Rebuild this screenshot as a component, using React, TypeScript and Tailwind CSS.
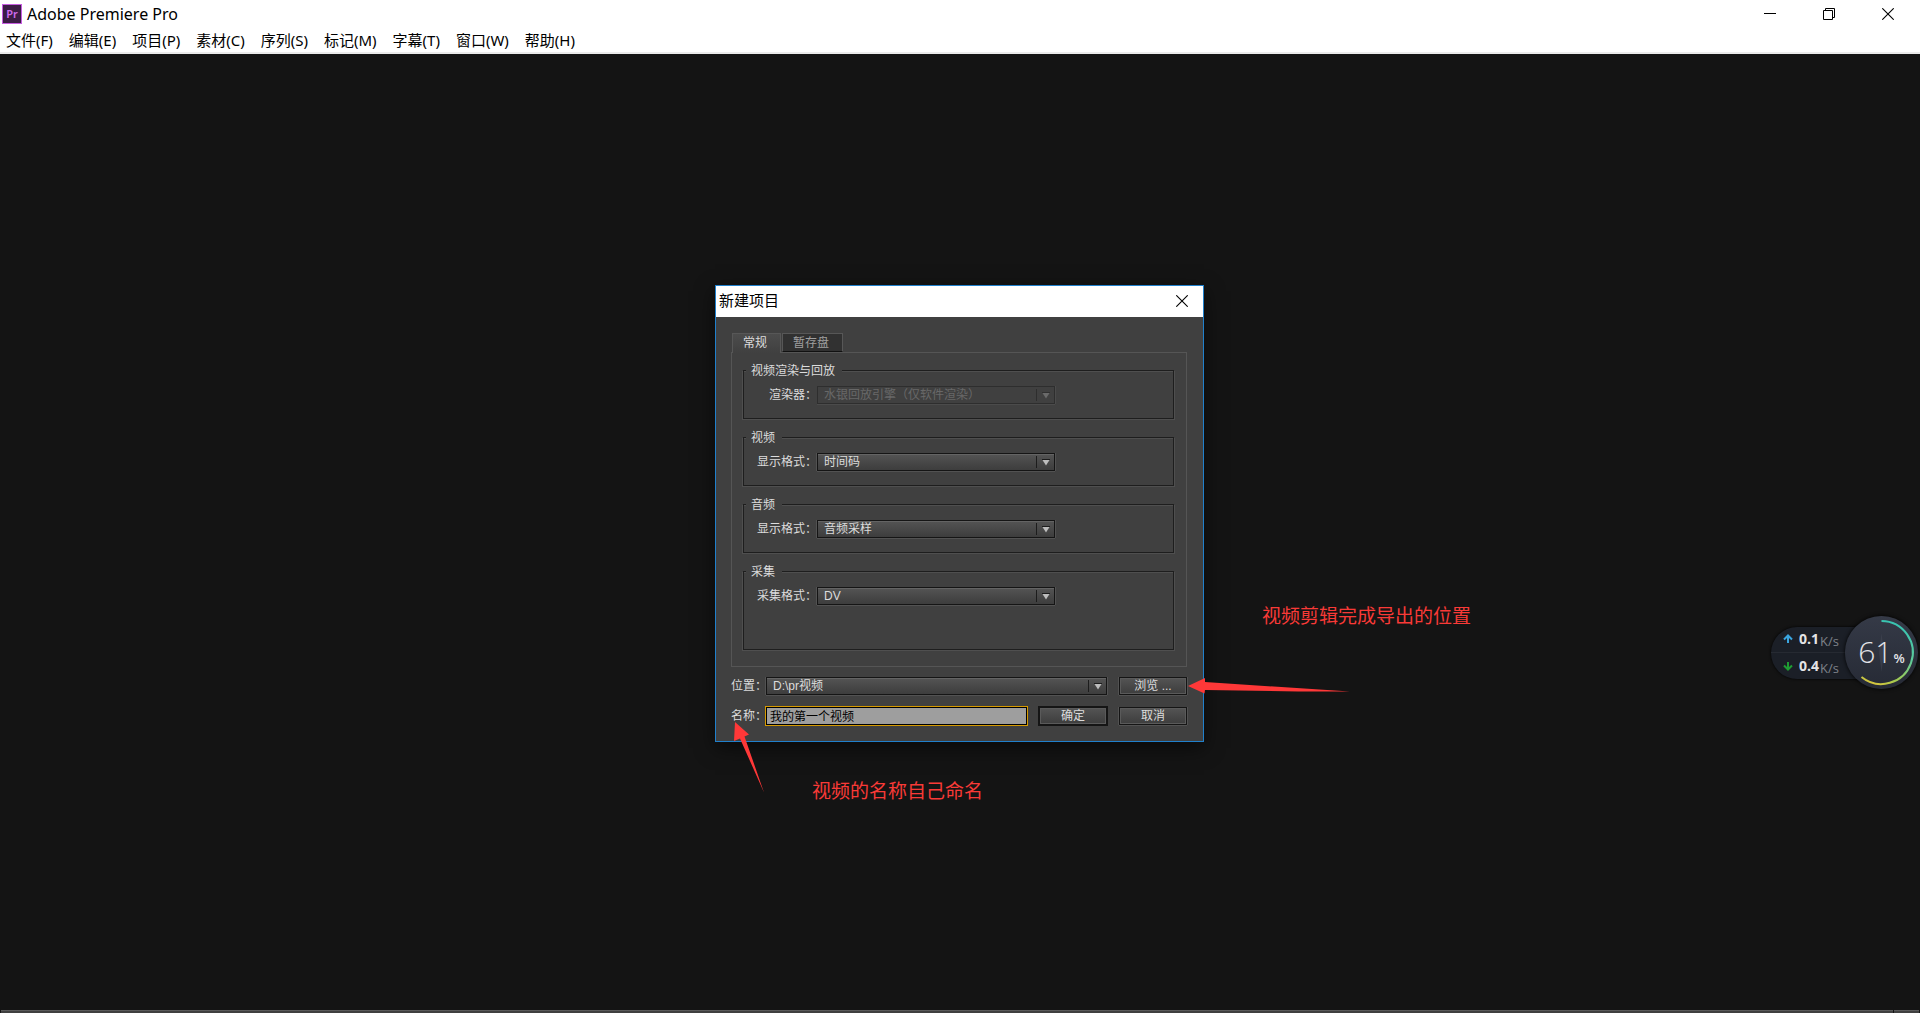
import { useState } from 'react';
import type { ReactNode } from 'react';

const menus = ['文件(F)', '编辑(E)', '项目(P)', '素材(C)', '序列(S)', '标记(M)', '字幕(T)', '窗口(W)', '帮助(H)'];

function CloseIcon() {
  return (
    <svg width="12" height="12" viewBox="0 0 12 12" stroke="#000" strokeWidth="1.1" aria-hidden="true">
      <path d="M0.3 0.3 11.7 11.7M11.7 0.3 0.3 11.7" />
    </svg>
  );
}

interface DropdownProps {
  id: string;
  value: string;
  disabled?: boolean;
  className?: string;
}

function Dropdown({ id, value, disabled, className = '' }: DropdownProps) {
  const look = disabled
    ? 'border-[#2e2e2e] bg-[#404040] text-[#686868] shadow-[0_1px_0_#4b4b4b,1px_0_0_#4b4b4b]'
    : 'border-[#151515] bg-linear-to-b from-[#545454] to-[#3d3d3d] text-[#dcdcdc] shadow-[0_1px_0_#525252,1px_0_0_#525252,-1px_0_0_#525252,inset_0_1px_0_#646464]';
  return (
    <div className={`relative h-[18px] border ${look} ${className}`}>
      <select
        id={id}
        disabled={disabled}
        className="block h-4 w-full appearance-none bg-transparent pl-[6px] pr-6 text-xs leading-4 outline-none"
      >
        <option>{value}</option>
      </select>
      <span className={`pointer-events-none absolute right-[17px] top-[2px] h-3 w-px ${disabled ? 'bg-[#2e2e2e]' : 'bg-[#1c1c1c]'}`} />
      <svg className="pointer-events-none absolute right-1 top-[5px]" width="8" height="7" viewBox="0 0 8 7" aria-hidden="true">
        <path d="M0 0h8v1H0z" fill={disabled ? '#303030' : '#1c1c1c'} />
        <path d="M0.5 1h7L4 6.5z" fill={disabled ? '#6a6a6a' : '#bdbdbd'} />
      </svg>
    </div>
  );
}

interface GroupProps {
  title: string;
  label: string;
  id: string;
  value: string;
  disabled?: boolean;
  tall?: boolean;
}

function Group({ title, label, id, value, disabled, tall }: GroupProps) {
  return (
    <fieldset
      className={`border border-[#1e1e1e] pl-[2px] shadow-[1px_1px_0_#4f4f4f,-1px_1px_0_#4f4f4f,inset_0_1px_0_#4f4f4f] ${tall ? 'pb-11' : 'pb-[14px]'}`}
    >
      <legend className="h-[19px] bg-[#404040] pl-[5px] pr-[7px] leading-[21px]">{title}</legend>
      <div className="flex items-center pt-[6px]">
        <label htmlFor={id} className="w-[71px] text-right leading-[18px]">
          {label}
        </label>
        <Dropdown id={id} value={value} disabled={disabled} className="w-[238px]" />
      </div>
    </fieldset>
  );
}

function DialogButton({ children, primary }: { children: ReactNode; primary?: boolean }) {
  return (
    <button
      className={`h-[18px] w-[68px] border border-[#151515] bg-linear-to-b from-[#545454] to-[#3d3d3d] text-xs leading-4 text-[#dcdcdc] ${
        primary
          ? 'shadow-[0_0_0_1px_#151515,inset_0_0_0_1px_#5a5a5a]'
          : 'shadow-[0_1px_0_#525252,1px_0_0_#525252,-1px_0_0_#525252,inset_0_0_0_1px_#5a5a5a]'
      }`}
    >
      {children}
    </button>
  );
}

function NewProjectDialog() {
  const [name, setName] = useState('我的第一个视频');

  return (
    <section
      role="dialog"
      aria-labelledby="dialog-title"
      className="relative w-[489px] border border-[#2080cc] bg-[#404040] font-['Liberation_Sans','Noto_Sans_CJK_SC',sans-serif] text-xs text-[#dcdcdc] shadow-[0_6px_18px_rgba(0,0,0,0.55)]"
    >
      <div className="flex h-[31px] items-center justify-between bg-white pb-px pl-[3px] pr-[15px]">
        <h2 id="dialog-title" className="text-[15px] leading-5 text-black">
          新建项目
        </h2>
        <button aria-label="关闭">
          <CloseIcon />
        </button>
      </div>

      <div className="pb-4 pl-[15px] pr-4 pt-4">
        {/* Tabs */}
        <div role="tablist" className="flex gap-px pl-px">
          <button
            role="tab"
            aria-selected="true"
            className="relative -mb-px h-5 w-[49px] border border-b-0 border-[#575757] bg-linear-to-b from-[#4c4c4c] to-[#404040] pb-[2px] pr-[3px] leading-4"
          >
            常规
          </button>
          <button
            role="tab"
            aria-selected="false"
            className="h-[19px] w-[61px] border border-[#575757] border-b-[#111] bg-[#313131] pr-[3px] leading-[18px] text-[#a0a0a0]"
          >
            暂存盘
          </button>
        </div>

        <div className="flex flex-col gap-[9px] border border-[#555] pb-4 pl-[11px] pr-3 pt-2">
          <Group title="视频渲染与回放" label="渲染器：" id="renderer" value="水银回放引擎（仅软件渲染）" disabled />
          <Group title="视频" label="显示格式：" id="video-format" value="时间码" />
          <Group title="音频" label="显示格式：" id="audio-format" value="音频采样" />
          <Group title="采集" label="采集格式：" id="capture-format" value="DV" tall />
        </div>

        <div className="mt-[10px] flex flex-col gap-3">
          <div className="flex gap-3">
            <div className="flex flex-1">
              <label htmlFor="location" className="w-[35px] whitespace-nowrap leading-[18px]">
                位置：
              </label>
              <Dropdown id="location" value="D:\pr视频" className="flex-1" />
            </div>
            <DialogButton>浏览 ...</DialogButton>
          </div>
          <div className="flex gap-3">
            <div className="flex flex-1">
              <label htmlFor="project-name" className="w-[35px] whitespace-nowrap leading-[18px]">
                名称：
              </label>
              <input
                id="project-name"
                type="text"
                value={name}
                onChange={(e) => setName(e.target.value)}
                className="h-[18px] min-w-0 flex-1 border border-black bg-[#9e9e9e] pb-[2px] pl-[3px] text-xs leading-4 text-black shadow-[0_0_0_1px_#d69a00] outline-none"
              />
            </div>
            <DialogButton primary>确定</DialogButton>
            <DialogButton>取消</DialogButton>
          </div>
        </div>
      </div>

      {/* Red annotations over the dialog */}
      <svg className="pointer-events-none absolute left-[472px] top-[391px]" width="164" height="18" viewBox="0 0 164 18" aria-hidden="true">
        <path d="M0 9 17 1V5L162 14.5H110L17 13 16.5 16.5z" fill="#ff3838" />
      </svg>
      <svg className="pointer-events-none absolute left-[17px] top-[435px]" width="32" height="72" viewBox="0 0 32 72" aria-hidden="true">
        <path d="M2 1 16 13.5 11.5 15.5 31 71.5 7 17.5 1 20z" fill="#ff3838" />
      </svg>
      <p className="absolute left-[546px] top-[317px] whitespace-nowrap text-[19px] leading-7 text-[#f93a37]">
        视频剪辑完成导出的位置
      </p>
      <p className="absolute left-24 top-[492px] whitespace-nowrap text-[19px] leading-7 text-[#f93a37]">
        视频的名称自己命名
      </p>
    </section>
  );
}

function SpeedRow({ value, up }: { value: string; up?: boolean }) {
  return (
    <div className="flex h-[26px] items-center pl-3">
      <svg
        width="10"
        height="10"
        viewBox="0 0 10 10"
        fill="none"
        stroke={up ? '#3aa5e0' : '#1f9d33'}
        strokeWidth="2"
        className={up ? '' : 'rotate-180'}
        aria-hidden="true"
      >
        <path d="M5 9V1.5M1 5.5 5 1.5 9 5.5" />
      </svg>
      <span className="ml-[6px] text-[14px] font-bold leading-5 text-[#e4e4e6]">{value}</span>
      <span className="ml-px pt-1 text-[13px] leading-4 text-[#7e828a]">K/s</span>
    </div>
  );
}

function SpeedWidget() {
  return (
    <aside className="absolute right-[2px] top-[616px] flex items-center font-['Open_Sans','Noto_Sans',sans-serif]">
      <div className="-mr-7 h-[52px] w-[102px] divide-y divide-[#262a32] rounded-l-full bg-[#1b1f27] shadow-[0_0_3px_#000]">
        <SpeedRow value="0.1" up />
        <SpeedRow value="0.4" />
      </div>
      <div className="relative flex size-[73px] items-center justify-center rounded-full bg-linear-to-b from-[#353a47] to-[#262a35] shadow-[0_0_4px_#000]">
        <svg className="absolute inset-0" width="73" height="73" viewBox="0 0 73 73" fill="none" aria-hidden="true">
          <defs>
            <linearGradient id="ring" x1="50" y1="4" x2="30" y2="69" gradientUnits="userSpaceOnUse">
              <stop offset="0" stopColor="#35c3b4" />
              <stop offset="0.5" stopColor="#5fcb9a" />
              <stop offset="0.85" stopColor="#a3c94f" />
              <stop offset="1" stopColor="#d8c43c" />
            </linearGradient>
          </defs>
          <path d="M36.5 5A31.5 31.5 0 1 1 16.5 61" stroke="url(#ring)" strokeWidth="2" />
          <path d="M36.5 17 39 36.5 36.5 56 34 36.5z" fill="#454a57" opacity="0.5" />
        </svg>
        <div className="relative flex items-baseline pb-px text-[#e3e4e8]">
          <span className="text-[30px] font-light leading-9">61</span>
          <span className="ml-px text-[13px] font-semibold leading-4">%</span>
        </div>
      </div>
    </aside>
  );
}

function App() {
  return (
    <div className="relative flex min-h-screen flex-col overflow-hidden bg-[#141414] font-['Noto_Sans','Noto_Sans_CJK_SC',sans-serif]">
      <header className="h-[54px] border-b-2 border-[#ebebeb] bg-white text-black">
        <div className="flex h-7 items-center justify-between pl-[2px] pr-[26px]">
          <div className="flex items-center gap-[5px]">
            <span className="flex size-5 items-center justify-center border border-[#c65de0] bg-[#3c1d45] text-[11px] font-semibold leading-4 text-[#cf6cf0]">
              Pr
            </span>
            <h1 className="text-[16px] leading-6">Adobe Premiere Pro</h1>
          </div>
          <div className="flex items-center gap-[47px]">
            <button aria-label="最小化">
              <svg width="12" height="12" viewBox="0 0 12 12" aria-hidden="true">
                <path d="M0 5h12v1H0z" />
              </svg>
            </button>
            <button aria-label="还原">
              <svg width="12" height="12" viewBox="0 0 12 12" fill="none" stroke="#000" aria-hidden="true">
                <path d="M0.5 2.5h9v9h-9zM2.5 2.5v-2h9v9h-2" />
              </svg>
            </button>
            <button aria-label="关闭窗口">
              <CloseIcon />
            </button>
          </div>
        </div>
        <nav className="flex h-6 items-center gap-4 pl-[6px] text-[15px] leading-6">
          {menus.map((menu) => (
            <button key={menu}>{menu}</button>
          ))}
        </nav>
      </header>

      <main className="flex flex-1 items-center justify-center pb-[37px] pr-px">
        <NewProjectDialog />
      </main>

      <SpeedWidget />

      {/* Status bar edge */}
      <footer className="flex h-[3px] gap-px px-px">
        <div className="flex-1 border-t border-[#5a5a5a] bg-[#404040]" />
        <div className="w-[25px] border-t border-[#5a5a5a] bg-[#404040]" />
      </footer>
    </div>
  );
}

export default App;
